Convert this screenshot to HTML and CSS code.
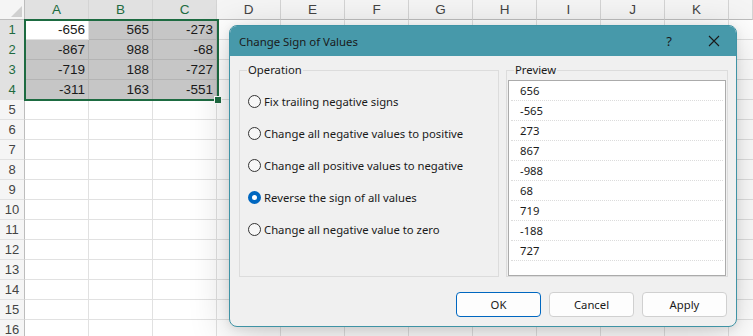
FILE: index.html
```html
<!DOCTYPE html>
<html>
<head>
<meta charset="utf-8">
<link rel="stylesheet" href="styles.css">
</head>
<body>
<div class="sheet">
  <div class="row hdr">
    <div class="rh corner"><span class="tri"></span></div>
    <div class="c hs">A</div><div class="c hs">B</div><div class="c hs">C</div>
    <div class="c">D</div><div class="c">E</div><div class="c">F</div><div class="c">G</div>
    <div class="c">H</div><div class="c">I</div><div class="c">J</div><div class="c">K</div><div class="c last"></div>
  </div>
  <div class="row">
    <div class="rh rs">1</div>
    <div class="c act">-656</div><div class="c sel">565</div><div class="c sel">-273</div>
    <div class="c"></div><div class="c"></div><div class="c"></div><div class="c"></div><div class="c"></div><div class="c"></div><div class="c"></div><div class="c"></div><div class="c last"></div>
  </div>
  <div class="row">
    <div class="rh rs">2</div>
    <div class="c sel">-867</div><div class="c sel">988</div><div class="c sel">-68</div>
    <div class="c"></div><div class="c"></div><div class="c"></div><div class="c"></div><div class="c"></div><div class="c"></div><div class="c"></div><div class="c"></div><div class="c last"></div>
  </div>
  <div class="row">
    <div class="rh rs">3</div>
    <div class="c sel">-719</div><div class="c sel">188</div><div class="c sel">-727</div>
    <div class="c"></div><div class="c"></div><div class="c"></div><div class="c"></div><div class="c"></div><div class="c"></div><div class="c"></div><div class="c"></div><div class="c last"></div>
  </div>
  <div class="row">
    <div class="rh rs">4</div>
    <div class="c sel">-311</div><div class="c sel">163</div><div class="c sel">-551</div>
    <div class="c"></div><div class="c"></div><div class="c"></div><div class="c"></div><div class="c"></div><div class="c"></div><div class="c"></div><div class="c"></div><div class="c last"></div>
  </div>
  <div class="row"><div class="rh">5</div><div class="c"></div><div class="c"></div><div class="c"></div><div class="c"></div><div class="c"></div><div class="c"></div><div class="c"></div><div class="c"></div><div class="c"></div><div class="c"></div><div class="c"></div><div class="c last"></div></div>
  <div class="row"><div class="rh">6</div><div class="c"></div><div class="c"></div><div class="c"></div><div class="c"></div><div class="c"></div><div class="c"></div><div class="c"></div><div class="c"></div><div class="c"></div><div class="c"></div><div class="c"></div><div class="c last"></div></div>
  <div class="row"><div class="rh">7</div><div class="c"></div><div class="c"></div><div class="c"></div><div class="c"></div><div class="c"></div><div class="c"></div><div class="c"></div><div class="c"></div><div class="c"></div><div class="c"></div><div class="c"></div><div class="c last"></div></div>
  <div class="row"><div class="rh">8</div><div class="c"></div><div class="c"></div><div class="c"></div><div class="c"></div><div class="c"></div><div class="c"></div><div class="c"></div><div class="c"></div><div class="c"></div><div class="c"></div><div class="c"></div><div class="c last"></div></div>
  <div class="row"><div class="rh">9</div><div class="c"></div><div class="c"></div><div class="c"></div><div class="c"></div><div class="c"></div><div class="c"></div><div class="c"></div><div class="c"></div><div class="c"></div><div class="c"></div><div class="c"></div><div class="c last"></div></div>
  <div class="row"><div class="rh">10</div><div class="c"></div><div class="c"></div><div class="c"></div><div class="c"></div><div class="c"></div><div class="c"></div><div class="c"></div><div class="c"></div><div class="c"></div><div class="c"></div><div class="c"></div><div class="c last"></div></div>
  <div class="row"><div class="rh">11</div><div class="c"></div><div class="c"></div><div class="c"></div><div class="c"></div><div class="c"></div><div class="c"></div><div class="c"></div><div class="c"></div><div class="c"></div><div class="c"></div><div class="c"></div><div class="c last"></div></div>
  <div class="row"><div class="rh">12</div><div class="c"></div><div class="c"></div><div class="c"></div><div class="c"></div><div class="c"></div><div class="c"></div><div class="c"></div><div class="c"></div><div class="c"></div><div class="c"></div><div class="c"></div><div class="c last"></div></div>
  <div class="row"><div class="rh">13</div><div class="c"></div><div class="c"></div><div class="c"></div><div class="c"></div><div class="c"></div><div class="c"></div><div class="c"></div><div class="c"></div><div class="c"></div><div class="c"></div><div class="c"></div><div class="c last"></div></div>
  <div class="row"><div class="rh">14</div><div class="c"></div><div class="c"></div><div class="c"></div><div class="c"></div><div class="c"></div><div class="c"></div><div class="c"></div><div class="c"></div><div class="c"></div><div class="c"></div><div class="c"></div><div class="c last"></div></div>
  <div class="row"><div class="rh">15</div><div class="c"></div><div class="c"></div><div class="c"></div><div class="c"></div><div class="c"></div><div class="c"></div><div class="c"></div><div class="c"></div><div class="c"></div><div class="c"></div><div class="c"></div><div class="c last"></div></div>
  <div class="row"><div class="rh">16</div><div class="c"></div><div class="c"></div><div class="c"></div><div class="c"></div><div class="c"></div><div class="c"></div><div class="c"></div><div class="c"></div><div class="c"></div><div class="c"></div><div class="c"></div><div class="c last"></div></div>

  <div class="selection"><span class="handle"></span></div>

  <div class="dialog">
    <div class="titlebar">
      <span class="title">Change Sign of Values</span>
      <span class="help">?</span>
      <svg class="close" width="12" height="12" viewBox="0 0 12 12"><path d="M1 1L11 11M11 1L1 11" stroke="#1a1a1a" stroke-width="1.1" fill="none"/></svg>
    </div>
    <div class="body">
      <div class="groups">
        <div class="group op">
          <span class="legend">Operation</span>
          <label class="radio"><span class="dot"></span>Fix trailing negative signs</label>
          <label class="radio"><span class="dot"></span>Change all negative values to positive</label>
          <label class="radio"><span class="dot"></span>Change all positive values to negative</label>
          <label class="radio"><span class="dot on"></span>Reverse the sign of all values</label>
          <label class="radio"><span class="dot"></span>Change all negative value to zero</label>
        </div>
        <div class="group pv">
          <span class="legend">Preview</span>
          <div class="list">
            <div class="item">656</div>
            <div class="item">-565</div>
            <div class="item">273</div>
            <div class="item">867</div>
            <div class="item">-988</div>
            <div class="item">68</div>
            <div class="item">719</div>
            <div class="item">-188</div>
            <div class="item">727</div>
          </div>
        </div>
      </div>
      <div class="buttons">
        <button class="btn primary">OK</button>
        <button class="btn">Cancel</button>
        <button class="btn">Apply</button>
      </div>
    </div>
  </div>
</div>
</body>
</html>
```

FILE: styles.css
```css
html, body {
  margin: 0;
  padding: 0;
  background: #fff;
}
.sheet {
  position: relative;
  width: 753px;
  height: 336px;
  overflow: hidden;
  font-family: "Liberation Sans", Arial, sans-serif;
  font-size: 13.5px;
  color: #1a1a1a;
}
.row {
  display: flex;
  height: 20px;
}
.rh {
  flex: none;
  width: 25px;
  box-sizing: border-box;
  border-right: 1px solid #bdbdbd;
  border-bottom: 1px solid #e1e1e1;
  background: #f5f5f5;
  text-align: center;
  line-height: 19px;
  font-size: 13px;
  color: #444;
}
.rh.rs {
  background: #e1e1e1;
  color: #1e6b40;
}
.c {
  flex: none;
  width: 64px;
  box-sizing: border-box;
  border-right: 1px solid #e1e1e1;
  border-bottom: 1px solid #e1e1e1;
  text-align: right;
  padding-right: 3px;
  line-height: 19px;
}
.c.last {
  flex: 1;
  border-right: none;
}
.hdr .c {
  background: #f5f5f5;
  border-bottom: 1px solid #bdbdbd;
  border-right: 1px solid #d4d4d4;
  text-align: center;
  padding-right: 0;
  color: #444;
  font-size: 13.5px;
}
.hdr .c.hs {
  background: #e1e1e1;
  color: #1e6b40;
}
.corner {
  position: relative;
  border-bottom: 1px solid #bdbdbd;
}
.tri {
  position: absolute;
  right: 2px;
  bottom: 2px;
  width: 0;
  height: 0;
  border-left: 11px solid transparent;
  border-bottom: 11px solid #d0d0d0;
}
.c.sel {
  background: #c6c6c6;
  border-right-color: #b4b4b4;
  border-bottom-color: #b4b4b4;
}
.c.act {
  background: #fff;
}
.selection {
  position: absolute;
  left: 24px;
  top: 19px;
  width: 195px;
  height: 82px;
  box-sizing: border-box;
  border: 2px solid #1d6b41;
}
.handle {
  position: absolute;
  right: -5px;
  bottom: -5px;
  width: 6px;
  height: 6px;
  background: #1d6b41;
  border: 1px solid #fff;
}

/* Dialog */
.dialog {
  position: absolute;
  left: 229px;
  top: 25px;
  width: 508px;
  height: 302px;
  box-sizing: border-box;
  border: 1px solid #3f93a5;
  border-radius: 8px;
  overflow: hidden;
  background: #f0f0f0;
  box-shadow: 0 8px 40px rgba(0, 0, 0, 0.2), 0 2px 8px rgba(0, 0, 0, 0.08);
  font-family: "Noto Sans", "Liberation Sans", sans-serif;
  font-size: 11.3px;
  color: #1a1a1a;
}
.titlebar {
  height: 30px;
  background: #4799aa;
  display: flex;
  align-items: center;
  padding-left: 9px;
  padding-right: 16px;
}
.title {
  flex: 1;
  font-size: 11.4px;
  color: #1a1a1a;
}
.help {
  font-size: 13px;
  margin-right: 36px;
}
.close {
  display: block;
}
.body {
  padding: 14px 8px 9px 9px;
}
.groups {
  display: flex;
  gap: 7px;
  height: 207px;
}
.group {
  position: relative;
  box-sizing: border-box;
  border: 1px solid #dcdcdc;
  height: 207px;
}
.group.op {
  width: 260px;
  padding-top: 22px;
  padding-left: 8px;
  display: flex;
  flex-direction: column;
  gap: 16px;
}
.group.pv {
  width: 222px;
  padding: 9px 1px 0 1px;
}
.legend {
  position: absolute;
  top: -9px;
  left: 7px;
  padding: 0 1px;
  background: #f0f0f0;
  line-height: 16px;
}
.radio {
  display: flex;
  align-items: center;
  height: 16px;
  white-space: nowrap;
}
.dot {
  flex: none;
  width: 13px;
  height: 13px;
  box-sizing: border-box;
  border: 1px solid #333;
  border-radius: 50%;
  margin-right: 3px;
  background: #f7f7f7;
}
.dot.on {
  border: 4px solid #0067c0;
  background: #fff;
}
.list {
  box-sizing: border-box;
  height: 196px;
  border: 1px solid #ababab;
  background: #fff;
  padding: 0 2px;
}
.item {
  height: 20px;
  box-sizing: border-box;
  border-bottom: 1px dotted #dcdcdc;
  line-height: 19px;
  padding-left: 9px;
}
.buttons {
  display: flex;
  justify-content: flex-end;
  gap: 8px;
  margin-top: 15px;
  padding-right: 1px;
}
.btn {
  width: 85px;
  height: 25px;
  box-sizing: border-box;
  border: 1px solid #d0d0d0;
  border-radius: 4px;
  background: #fdfdfd;
  font-family: "Noto Sans", "Liberation Sans", sans-serif;
  font-size: 11.3px;
  color: #1a1a1a;
  padding: 0;
}
.btn.primary {
  border-color: #0067c0;
}
```
